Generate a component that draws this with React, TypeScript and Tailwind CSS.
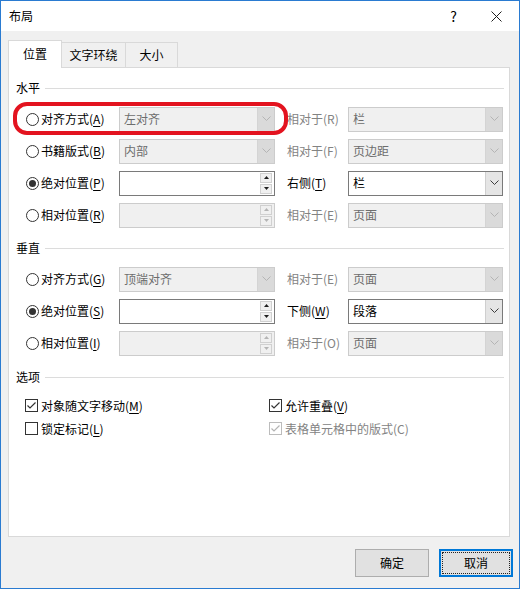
import React from "react";

const FONT = { fontFamily: '"Noto Sans CJK SC", "Noto Sans", sans-serif' };

function Mn({ text, k }: { text: string; k: string }) {
  // label with underlined mnemonic letter, e.g. 对齐方式(A)
  return (
    <span>
      {text}(<u className="underline-offset-2">{k}</u>)
    </span>
  );
}

function Chevron({ disabled }: { disabled?: boolean }) {
  return (
    <svg width="9" height="6" viewBox="0 0 9 6">
      <polyline
        points="0.5,0.5 4.5,4.5 8.5,0.5"
        fill="none"
        stroke={disabled ? "#b4b4b4" : "#3c3c3c"}
        strokeWidth="1"
      />
    </svg>
  );
}

function Radio({ checked }: { checked?: boolean }) {
  return (
    <div className="w-[13px] h-[13px] rounded-full border border-[#333] bg-white flex items-center justify-center shrink-0">
      {checked && <div className="w-[7px] h-[7px] rounded-full bg-[#333]" />}
    </div>
  );
}

function Check({ checked, disabled }: { checked?: boolean; disabled?: boolean }) {
  return (
    <div
      className={`w-[13px] h-[13px] border bg-white flex items-center justify-center shrink-0 ${
        disabled ? "border-[#bcbcbc]" : "border-[#333]"
      }`}
    >
      {checked && (
        <svg width="11" height="11" viewBox="0 0 11 11">
          <polyline
            points="1.5,5.5 4,8 9.5,2.5"
            fill="none"
            stroke={disabled ? "#b4b4b4" : "#333"}
            strokeWidth="1.2"
          />
        </svg>
      )}
    </div>
  );
}

function Select({ value, disabled, w }: { value?: string; disabled?: boolean; w: string }) {
  return (
    <div
      className={`${w} h-[25px] flex items-stretch border ${
        disabled ? "border-[#cccccc] bg-[#f0f0f0] text-[#6d6d6d]" : "border-[#7a7a7a] bg-white text-black"
      }`}
    >
      <div className="flex-1 flex items-center pl-[4px]">{value}</div>
      <div
        className={`w-[17px] flex items-center justify-center border-l ${
          disabled ? "border-[#d4d4d4] bg-[#dadada]" : "border-[#cfcfcf] bg-[#e5e5e5]"
        }`}
      >
        <Chevron disabled={disabled} />
      </div>
    </div>
  );
}

function Spin({ disabled }: { disabled?: boolean }) {
  const tri = disabled ? "#b4b4b4" : "#1e1e1e";
  return (
    <div
      className={`w-[156px] h-[25px] flex items-stretch border ${
        disabled ? "border-[#cccccc] bg-[#f0f0f0]" : "border-[#7a7a7a] bg-white"
      }`}
    >
      <div className="flex-1" />
      <div className="w-[12px] mr-[2px] my-[1px] flex flex-col gap-px">
        <div className="flex-1 flex items-center justify-center border border-[#d0d0d0] bg-[#f0f0f0]">
          <svg width="5" height="3" viewBox="0 0 5 3">
            <polygon points="0,3 2.5,0 5,3" fill={tri} />
          </svg>
        </div>
        <div className="flex-1 flex items-center justify-center border border-[#d0d0d0] bg-[#f0f0f0]">
          <svg width="5" height="3" viewBox="0 0 5 3">
            <polygon points="0,0 2.5,3 5,0" fill={tri} />
          </svg>
        </div>
      </div>
    </div>
  );
}

function Header({ title }: { title: string }) {
  return (
    <div className="h-[20px] flex items-center pl-[7px] pr-[5px]">
      <span>{title}</span>
      <div className="flex-1 h-px bg-[#dcdcdc] ml-[5px]" />
    </div>
  );
}

interface RowProps {
  checked?: boolean;
  label: string;
  k: string;
  left: React.ReactNode;
  rightLabel: React.ReactNode;
  rightDisabled?: boolean;
  right: React.ReactNode;
}

function Row({ checked, label, k, left, rightLabel, rightDisabled, right }: RowProps) {
  return (
    <div className="h-[32px] flex items-center pl-[17px]">
      <Radio checked={checked} />
      <div className="ml-[2px] w-[78px]">
        <Mn text={label} k={k} />
      </div>
      {left}
      <div className={`ml-[12px] w-[61px] ${rightDisabled ? "text-[#838383]" : "text-black"}`}>{rightLabel}</div>
      {right}
    </div>
  );
}

export default function App() {
  return (
    <div
      className="relative w-[520px] h-[589px] border border-[#2a7bd1] bg-[#f0f0f0] flex flex-col text-[12px] text-black overflow-hidden"
      style={FONT}
    >
      {/* title bar */}
      <div className="h-[30px] bg-white flex items-center pl-[8px] shrink-0">
        <span>布局</span>
        <span className="ml-auto text-[14px] mr-[34px]">?</span>
        <svg width="11" height="11" viewBox="0 0 11 11" className="mr-[17px]">
          <path d="M0.5 0.5 L10.5 10.5 M10.5 0.5 L0.5 10.5" stroke="#1e1e1e" strokeWidth="1" />
        </svg>
      </div>

      {/* tabs */}
      <div className="flex items-end pt-[9px] ml-[7px] -mb-px relative z-10">
        <div className="h-[28px] w-[54px] bg-white border border-b-0 border-[#d9d9d9] flex items-center justify-center pb-[2px]">
          位置
        </div>
        <div className="h-[26px] w-[64px] border border-l-0 border-[#d9d9d9] flex items-center justify-center">
          文字环绕
        </div>
        <div className="h-[26px] w-[52px] border border-l-0 border-[#d9d9d9] flex items-center justify-center">
          大小
        </div>
      </div>

      {/* panel */}
      <div className="ml-[7px] w-[502px] h-[470px] bg-white border border-[#d9d9d9] flex flex-col shrink-0">
        <div className="mt-[10px]">
          <Header title="水平" />
        </div>
        <div className="mt-[5px] flex flex-col">
          <Row
            label="对齐方式"
            k="A"
            left={<Select value="左对齐" disabled w="w-[156px]" />}
            rightLabel="相对于(R)"
            rightDisabled
            right={<Select value="栏" disabled w="w-[155px]" />}
          />
          <Row
            label="书籍版式"
            k="B"
            left={<Select value="内部" disabled w="w-[156px]" />}
            rightLabel="相对于(F)"
            rightDisabled
            right={<Select value="页边距" disabled w="w-[155px]" />}
          />
          <Row
            checked
            label="绝对位置"
            k="P"
            left={<Spin />}
            rightLabel={<Mn text="右侧" k="T" />}
            right={<Select value="栏" w="w-[155px]" />}
          />
          <Row
            label="相对位置"
            k="R"
            left={<Spin disabled />}
            rightLabel="相对于(E)"
            rightDisabled
            right={<Select value="页面" disabled w="w-[155px]" />}
          />
        </div>

        <div className="mt-[7px]">
          <Header title="垂直" />
        </div>
        <div className="mt-[5px] flex flex-col">
          <Row
            label="对齐方式"
            k="G"
            left={<Select value="顶端对齐" disabled w="w-[156px]" />}
            rightLabel="相对于(E)"
            rightDisabled
            right={<Select value="页面" disabled w="w-[155px]" />}
          />
          <Row
            checked
            label="绝对位置"
            k="S"
            left={<Spin />}
            rightLabel={<Mn text="下侧" k="W" />}
            right={<Select value="段落" w="w-[155px]" />}
          />
          <Row
            label="相对位置"
            k="I"
            left={<Spin disabled />}
            rightLabel="相对于(O)"
            rightDisabled
            right={<Select value="页面" disabled w="w-[155px]" />}
          />
        </div>

        <div className="mt-[8px]">
          <Header title="选项" />
        </div>
        <div className="mt-[7px] grid grid-cols-[244px_1fr] pl-[16px]">
          <div className="h-[23px] flex items-center gap-[3px]">
            <Check checked />
            <Mn text="对象随文字移动" k="M" />
          </div>
          <div className="h-[23px] flex items-center gap-[3px]">
            <Check checked />
            <Mn text="允许重叠" k="V" />
          </div>
          <div className="h-[23px] flex items-center gap-[3px]">
            <Check />
            <Mn text="锁定标记" k="L" />
          </div>
          <div className="h-[23px] flex items-center gap-[3px] text-[#838383]">
            <Check checked disabled />
            <span>表格单元格中的版式(C)</span>
          </div>
        </div>
      </div>

      {/* buttons */}
      <div className="mt-[12px] flex justify-end gap-[10px] pr-[6px]">
        <div className="w-[74px] h-[28px] bg-[#e1e1e1] border border-[#adadad] flex items-center justify-center">
          确定
        </div>
        <div className="w-[74px] h-[28px] bg-[#e1e1e1] border-2 border-[#0078d7] p-px">
          <div className="w-full h-full border border-dotted border-[#222] flex items-center justify-center">
            取消
          </div>
        </div>
      </div>

      {/* red annotation drawn over the first row */}
      <div className="absolute left-[12px] top-[101px] w-[275px] h-[33px] border-[4px] border-[#e3131f] rounded-[14px] pointer-events-none" />
    </div>
  );
}
